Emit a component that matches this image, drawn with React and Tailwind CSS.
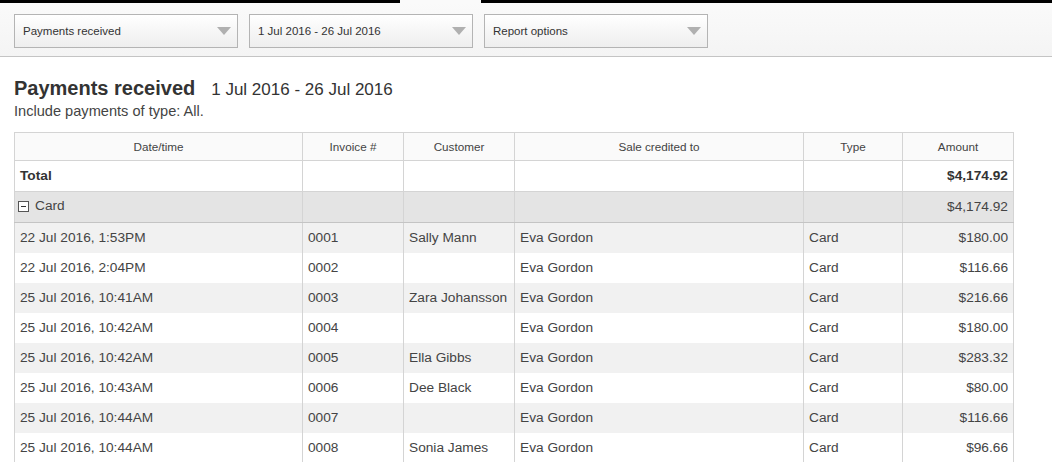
import React from "react";

const rows = [
  ["22 Jul 2016, 1:53PM", "0001", "Sally Mann", "Eva Gordon", "Card", "$180.00"],
  ["22 Jul 2016, 2:04PM", "0002", "", "Eva Gordon", "Card", "$116.66"],
  ["25 Jul 2016, 10:41AM", "0003", "Zara Johansson", "Eva Gordon", "Card", "$216.66"],
  ["25 Jul 2016, 10:42AM", "0004", "", "Eva Gordon", "Card", "$180.00"],
  ["25 Jul 2016, 10:42AM", "0005", "Ella Gibbs", "Eva Gordon", "Card", "$283.32"],
  ["25 Jul 2016, 10:43AM", "0006", "Dee Black", "Eva Gordon", "Card", "$80.00"],
  ["25 Jul 2016, 10:44AM", "0007", "", "Eva Gordon", "Card", "$116.66"],
  ["25 Jul 2016, 10:44AM", "0008", "Sonia James", "Eva Gordon", "Card", "$96.66"],
];

function Dropdown({ label, className }) {
  return (
    <div
      className={
        "h-[34px] border border-[#b4b4b4] bg-gradient-to-b from-[#ffffff] to-[#eeeeee] flex items-center justify-between pl-[8px] pr-[6px] " +
        className
      }
    >
      <span className="text-[11.5px] text-[#333] pt-[2px]">{label}</span>
      <svg width="14" height="8" viewBox="0 0 14 8">
        <polygon points="0,0 14,0 7,8" fill="#b0b0b0" />
      </svg>
    </div>
  );
}

export default function App() {
  const font = { fontFamily: '"Liberation Sans", Arial, sans-serif' };
  return (
    <div className="w-[1052px] h-[462px] overflow-hidden bg-white" style={font}>
      <div className="flex h-[3px]">
        <div className="w-[400px] bg-black" />
        <div className="w-[81px] bg-[#fafafa]" />
        <div className="flex-1 bg-black" />
      </div>
      <div className="h-[54px] bg-gradient-to-b from-[#fafafa] to-[#f4f4f4] border-b border-[#c4c4c4] flex items-start pt-[10px] pl-[14px] gap-[11px]">
        <Dropdown label="Payments received" className="w-[224px] mt-[1px]" />
        <Dropdown label="1 Jul 2016 - 26 Jul 2016" className="w-[224px] mt-[1px]" />
        <Dropdown label="Report options" className="w-[224px] mt-[1px]" />
      </div>

      <div className="pl-[14px] pt-[19px]">
        <div className="flex items-baseline gap-[16px] text-[#333] leading-[24px]">
          <span className="text-[20px] font-bold">Payments received</span>
          <span className="text-[17px]">1 Jul 2016 - 26 Jul 2016</span>
        </div>
        <div className="text-[14.6px] leading-[18px] text-[#444]">Include payments of type: All.</div>

        <table className="mt-[12px] border-collapse text-[13.7px] text-[#444] w-[1000px] table-fixed">
          <colgroup>
            <col className="w-[288px]" />
            <col className="w-[101px]" />
            <col className="w-[111px]" />
            <col className="w-[289px]" />
            <col className="w-[99px]" />
            <col className="w-[111px]" />
          </colgroup>
          <thead>
            <tr className="h-[28px] bg-[#fafafa] text-[11.7px] text-[#444]">
              {["Date/time", "Invoice #", "Customer", "Sale credited to", "Type", "Amount"].map((h) => (
                <th key={h} className="font-normal border border-[#d4d4d4] text-center">
                  {h}
                </th>
              ))}
            </tr>
          </thead>
          <tbody>
            <tr className="h-[31px] bg-white font-bold text-[#333]">
              <td className="border border-[#d4d4d4] px-[5px]">Total</td>
              <td className="border border-[#d4d4d4]" />
              <td className="border border-[#d4d4d4]" />
              <td className="border border-[#d4d4d4]" />
              <td className="border border-[#d4d4d4]" />
              <td className="border border-[#d4d4d4] text-right px-[5px]">$4,174.92</td>
            </tr>
            <tr className="h-[31px] bg-[#e4e4e4]">
              <td className="border-x border-[#d4d4d4] border-y border-y-[#c4c4c4] px-[3px] pt-[1px]">
                <span className="inline-flex items-center gap-[6px]">
                  <svg width="11" height="11" viewBox="0 0 11 11">
                    <rect x="0.5" y="0.5" width="10" height="10" fill="#fff" stroke="#555" />
                    <line x1="3" y1="5.5" x2="8" y2="5.5" stroke="#333" />
                  </svg>
                  <span>Card</span>
                </span>
              </td>
              <td className="border-x border-[#d4d4d4] border-y border-y-[#c4c4c4]" />
              <td className="border-x border-[#d4d4d4] border-y border-y-[#c4c4c4]" />
              <td className="border-x border-[#d4d4d4] border-y border-y-[#c4c4c4]" />
              <td className="border-x border-[#d4d4d4] border-y border-y-[#c4c4c4]" />
              <td className="border-x border-[#d4d4d4] border-y border-y-[#c4c4c4] text-right px-[5px] pt-[1px]">$4,174.92</td>
            </tr>
            {rows.map((r, i) => (
              <tr key={i} className={"h-[30px] " + (i % 2 === 0 ? "bg-[#f1f1f1]" : "bg-white")}>
                {r.map((c, j) => (
                  <td
                    key={j}
                    className={
                      "border-x border-[#d4d4d4] px-[5px] pt-[2px] whitespace-nowrap overflow-hidden " +
                      (j === 5 ? "text-right" : "text-left")
                    }
                  >
                    {c}
                  </td>
                ))}
              </tr>
            ))}
          </tbody>
        </table>
      </div>
    </div>
  );
}
